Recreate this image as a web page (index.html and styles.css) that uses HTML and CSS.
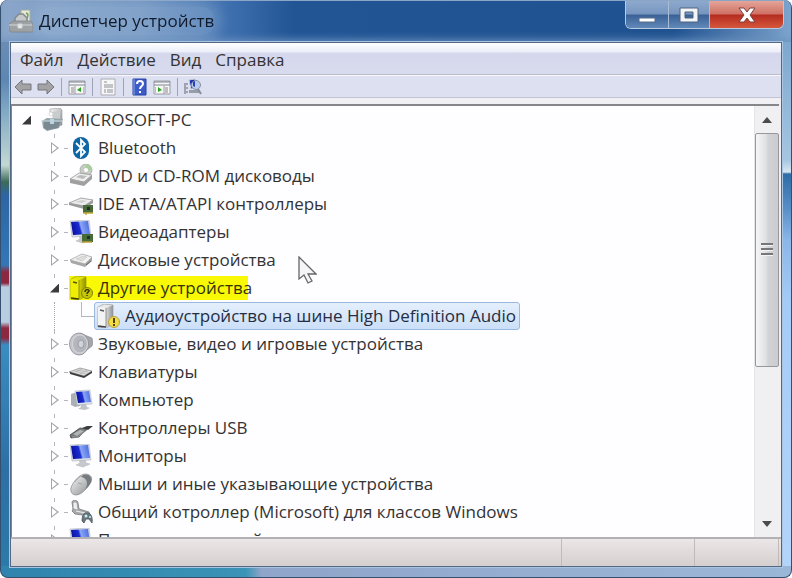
FILE: index.html
```
<!DOCTYPE html>
<html lang="ru">

<head>
    <meta charset="UTF-8">
    <meta name="viewport" content="width=device-width, initial-scale=1.0">
    <title>Диспетчер устройств</title>
    <link rel="stylesheet" href="styles.css">
</head>

<body>
    <!-- shared icons -->
    <svg class="sprite" aria-hidden="true">
        <defs>
            <linearGradient id="metal" x1="0" y1="0" x2="1" y2="1">
                <stop offset="0" stop-color="#fafafa" />
                <stop offset="1" stop-color="#85898d" />
            </linearGradient>
            <linearGradient id="side" x1="0" y1="0" x2="1" y2="0">
                <stop offset="0" stop-color="#d9dadc" />
                <stop offset="1" stop-color="#919396" />
            </linearGradient>
            <linearGradient id="screen" x1="0" y1="0.6" x2="1" y2="0.4">
                <stop offset="0" stop-color="#0710a0" />
                <stop offset="0.45" stop-color="#1b2cd0" />
                <stop offset="0.55" stop-color="#8aa6f5" />
                <stop offset="1" stop-color="#4a6be0" />
            </linearGradient>
        </defs>
        <symbol id="pc" viewBox="0 0 24 24">
            <path d="M9 1l10-1 2 2v15l-9 3V5L9 4z" fill="url(#metal)" stroke="#999" stroke-width=".6" />
            <path d="M12 4l7-1v9l-7 1z" fill="#c9cccd" />
            <circle cx="10" cy="6" r="2" fill="#fff" stroke="#bbb" stroke-width=".5" />
            <path d="M1 13l5-3 16 1-4 9-12 3-4-3z" fill="#96a3a9" />
            <path d="M3 13l14 1 3-2-3 8-11 2-3-2z" fill="#7b8a92" />
            <path d="M0 13h22" stroke="#c9dce1" />
            <path d="M9 11h4v5H9z" fill="#b9d5df" />
        </symbol>
        <symbol id="bluetooth" viewBox="0 0 24 24">
            <rect x="4" y="1" width="16" height="22" rx="8" fill="#0e66a4" />
            <path d="M7 7l9 9-4 4V4l4 4-9 9" fill="none" stroke="#fff" stroke-width="1.8" />
        </symbol>
        <symbol id="disc" viewBox="0 0 24 24">
            <ellipse cx="17" cy="6" rx="6" ry="6" fill="#c6cbc6" stroke="#9da49d" stroke-width=".7" />
            <path d="M17 0a6 6 0 0 1 6 6l-6 0z" fill="#a9cf9c" />
            <circle cx="17" cy="6" r="2" fill="#fff" />
            <path d="M1 15l9-6 13 2-8 7z" fill="#eee" stroke="#888" stroke-width=".7" />
            <path d="M1 15l14 3 8-7v4l-8 7-14-3z" fill="#a0a0a0" />
            <path d="M7 13l4-2 7 1-4 3z" fill="#bbb" />
        </symbol>
        <symbol id="ide" viewBox="0 0 24 24">
            <path d="M0 11l12-5 12 2-9 6z" fill="#ededed" stroke="#888" stroke-width=".7" />
            <path d="M0 11l15 3 9-6v3l-9 6-15-4z" fill="#9b9b9b" />
            <path d="M6 10l7-2 5 1-5 2z" fill="#d1d1d1" />
            <path d="M14 13h10v8H14z" fill="#466b39" />
            <path d="M14 21h10M17 21v2" stroke="#c4a939" stroke-width="1.5" />
            <path d="M18 15h3v3h-3z" fill="#222c24" />
        </symbol>
        <symbol id="display" viewBox="0 0 24 24">
            <path d="M10 15l6-1 1 5 4 1-7 3-7-2 4-2z" fill="#c5c8cc" stroke="#aeb2b6" stroke-width=".5" />
            <path d="M1 1l19-1 2 16-19 1z" fill="#d8dde6" stroke="#a5acb7" stroke-width=".5" />
            <path d="M2 2l17-1 2 13-17 1z" fill="url(#screen)" />
        </symbol>
        <symbol id="video" viewBox="0 0 24 24">
            <use href="#display" />
            <path d="M13 14h11v8H13z" fill="#466b39" />
            <path d="M13 22h10" stroke="#b99f37" stroke-width="1.5" />
            <path d="M18 16h3v3h-3z" fill="#20312a" />
        </symbol>
        <symbol id="drive" viewBox="0 0 24 24">
            <path d="M1 12l12-6 10 3-7 7z" fill="#f2f2f2" stroke="#999" stroke-width=".7" />
            <path d="M1 12l15 4 7-7v4l-7 6-14-4z" fill="#a7a7a7" />
            <path d="M7 11l7-3 4 1-5 4z" fill="#dedede" stroke="#bbb" stroke-width=".5" />
            <path d="M17 17l5-4" stroke="#646464" />
        </symbol>
        <symbol id="tower" viewBox="0 0 24 24">
            <path d="M2 3l6-3 9 1v19l-7 4-8-1z" fill="#e9e9ea" stroke="#8d8f91" stroke-width=".6" />
            <path d="M10 4l7-3v19l-7 4z" fill="url(#side)" />
            <path d="M2 3l8 1v19l-8-1z" fill="#f3f3f4" />
            <path d="M4 6l4 1" stroke="#55575a" stroke-width="1.6" />
            <path d="M2 22l8 1" stroke="#3f4144" stroke-width="1.5" />
            <path d="M10 4v19" stroke="#77797c" stroke-width=".8" />
        </symbol>
        <symbol id="unknown" viewBox="0 0 24 24">
            <use href="#tower" />
            <circle cx="18" cy="17" r="5.500" fill="#c9c9a6" stroke="#85856b" />
            <path d="M16 16c0-3 4-3 4-1 0 1-2 1-2 3M18 19v1" fill="none" stroke="#333" stroke-width="1.4" />
        </symbol>
        <symbol id="warning" viewBox="0 0 24 24">
            <use href="#tower" />
            <circle cx="18" cy="18" r="5.5" fill="#f3dc45" stroke="#b9a13c" />
            <path d="M18 14v5M18 20v2" stroke="#3e3512" stroke-width="1.8" />
        </symbol>
        <symbol id="sound" viewBox="0 0 24 24">
            <path d="M11 1l7 3 5 2c1 4 1 6 0 8l-5 4-6 5z" fill="#a3a5ab" stroke="#808288" stroke-width=".6" />
            <ellipse cx="10" cy="12" rx="9.500" ry="11" fill="#c6c7cd" stroke="#8b8d94" stroke-width=".8" />
            <ellipse cx="11" cy="12" rx="7.500" ry="9" fill="#b4b6bd" stroke="#d8dae0" stroke-width=".8" />
            <ellipse cx="12" cy="12" rx="3" ry="4" fill="#d0d3d8" stroke="#8e9299" stroke-width=".8" />
        </symbol>
        <symbol id="keyboard" viewBox="0 0 24 24">
            <path d="M0 12l11-4 12 3-8 5z" fill="#dcdcdc" stroke="#888" stroke-width=".7" />
            <path d="M1 12l14 4 8-5v2l-8 5-14-4z" fill="#3b3d3f" />
            <path d="M5 11l12 3M8 10l11 2M6 12l7-3M11 14l7-4" stroke="#aaa" stroke-width=".6" />
        </symbol>
        <symbol id="computer" viewBox="0 0 24 24">
            <path d="M2 6l6-2 3 1v13l-5 1-4-2z" fill="#aab0b4" />
            <path d="M11 16h6l1 3 3 1-5 2-7-1 3-2z" fill="#bfc4c7" />
            <path d="M6 3l15-1 2 14-15 1z" fill="#dce2ea" stroke="#a5acb7" stroke-width=".5" />
            <path d="M7 4l13-1 2 11-13 1z" fill="url(#screen)" />
        </symbol>
        <symbol id="usb" viewBox="0 0 24 24">
            <path d="M1 19L11 12l7 1-8 8-8 1z" fill="#75797b" stroke="#444" stroke-width=".8" />
            <path d="M4 18l7-4 4 1-7 5z" fill="#b3b6b7" />
            <path d="M13 12l5-2h6l-5 4z" fill="#3b3e40" />
            <path d="M3 21l6 0 9-7" fill="none" stroke="#aaa" stroke-width=".8" />
        </symbol>
        <symbol id="mouse" viewBox="0 0 24 24">
            <path d="M2 19c-2-5 8-17 14-17 5 0 8 3 6 8-3 5-9 13-15 13-3 0-5-2-5-4z" fill="url(#metal)" stroke="#888" stroke-width=".7" />
            <path d="M14 3c5-2 10 2 8 7-1 3-4 6-6 8 4-7 2-12-4-13z" fill="#777b7f" />
            <path d="M12 4c-3 2-5 4-6 6M9 11l4 1" fill="none" stroke="#999" stroke-width=".8" />
        </symbol>
        <symbol id="game" viewBox="0 0 24 24">
            <path d="M3 2c1-3 6-2 6 1l1 6 10 3 1 4-15-2-3-3 1-2z" fill="#a5a9ab" stroke="#777b7e" stroke-width=".8" />
            <path d="M5 3h2l1 6-3-1zM7 11l9 2" fill="#eee" stroke="#eee" />
            <path d="M13 21c0-6 2-9 6-8 3 0 5 5 4 10l-3-4h-3l-2 4z" fill="#67777f" stroke="#515b60" stroke-width=".8" />
            <circle cx="17" cy="16" r="1.500" fill="#d0eaf2" />
            <circle cx="21" cy="17" r="1" fill="#d0eaf2" />
        </symbol>
    </svg>

    <main class="window">
        <header class="titlebar">
            <h1 class="title">
                <svg class="app-icon" viewBox="0 0 24 24" aria-hidden="true">
                    <path d="M12 1h9v15h-9z" fill="#e9ead9" stroke="#a5aaa0" />
                    <path d="M17 4c3 1 2 4 0 7" fill="none" stroke="#68a255" stroke-width="1.500" />
                    <path d="M6 12V9l4-4h4l4 4v4" fill="#c7cacb" stroke="#85898b" stroke-width="1.500" />
                    <path d="M0 15l4-3h18l2 3v8H2l-2-2z" fill="#9da1a3" stroke="#7b7f81" stroke-width=".7" />
                    <path d="M0 16h23M9 15h4v4H9z" fill="#ededed" stroke="#d5d8da" />
                </svg>
                <span class="title-text">Диспетчер устройств</span>
            </h1>
            <div class="caption-buttons">
                <button class="minimize" aria-label="Свернуть">
                    <svg width="20" height="20" viewBox="0 0 20 20"><path d="M2 13h16v4H2z" fill="#fff" stroke="#596b86" /></svg>
                </button>
                <button class="maximize" aria-label="Развернуть">
                    <svg width="20" height="20" viewBox="0 0 20 20"><path d="M1 3h18v14H1zM6 7v6h8V7z" fill="#f2f4f8" fill-rule="evenodd" stroke="#53627a" /></svg>
                </button>
                <button class="close" aria-label="Закрыть">
                    <svg width="20" height="20" viewBox="0 0 20 20"><path d="M2 3h5l3 4 3-4h5l-5 7 5 7h-5l-3-4-3 4H2l5-7z" fill="#fff" stroke="#7b4040" /></svg>
                </button>
            </div>
        </header>

        <div class="client">
            <nav class="menubar">
                <button>Файл</button>
                <button>Действие</button>
                <button>Вид</button>
                <button>Справка</button>
            </nav>

            <div class="toolbar">
                <div class="group">
                    <button aria-label="Назад"><svg viewBox="0 0 18 18"><path d="M1 9l7-7v4h9v6H8v4z" fill="#a3a3a6" stroke="#77777b" /></svg></button>
                    <button aria-label="Вперёд"><svg viewBox="0 0 18 18"><path d="M17 9l-7-7v4H1v6h9v4z" fill="#a3a3a6" stroke="#77777b" /></svg></button>
                </div>
                <div class="group">
                    <button aria-label="Дерево консоли"><svg viewBox="0 0 18 18"><path d="M1 3h16v13H1z" fill="#f7f7f7" stroke="#999ba3" /><path d="M1 4h16M1 7h16" stroke="#7d8290" /><path d="M3 10h3M3 12h3M3 14h3M15 10h1M15 12h1M15 14h1" stroke="#888" /><path d="M7 8v8" stroke="#999" /><path d="M13 9v5l-4-2z" fill="#29a623" /></svg></button>
                </div>
                <div class="group">
                    <button aria-label="Свойства"><svg viewBox="0 0 18 18"><path d="M2 1h14v16H2z" fill="#f7f7f7" stroke="#aaacb4" /><path d="M5 4h3M5 7h9M5 9h9M5 12h2M8 12h6M5 14h2M8 14h6" stroke="#8d9298" /></svg></button>
                </div>
                <div class="group">
                    <button aria-label="Справка"><svg viewBox="0 0 18 18"><path d="M3 1h13v16H3z" fill="#3d5cc9" stroke="#2742a1" /><path d="M4 1v16" stroke="#8ba8ed" /><path d="M7 6c0-4 6-4 6 0 0 2-3 2-3 5M10 13v2" fill="none" stroke="#fff" stroke-width="2" /></svg></button>
                    <button aria-label="Панель действий"><svg viewBox="0 0 18 18"><path d="M1 3h16v13H1z" fill="#f7f7f7" stroke="#999ba3" /><path d="M1 4h16M1 7h16" stroke="#7d8290" /><path d="M12 10h3M12 12h3M12 14h3M2 10h1M2 12h1M2 14h1" stroke="#888" /><path d="M11 8v8" stroke="#999" /><path d="M5 9v5l4-2z" fill="#29a623" /></svg></button>
                </div>
                <div class="group">
                    <button aria-label="Обновить конфигурацию"><svg viewBox="0 0 18 18"><path d="M1 5v11M3 5v2M3 9v2M3 13v2" stroke="#8b8e98" stroke-width="1.500" /><path d="M5 2l6-1 1 9-5 1z" fill="#1531a8" stroke="#c9cedc" /><path d="M5 12h9l2 3H5z" fill="#979da7" /><circle cx="12" cy="7" r="4.500" fill="#b8ccef" stroke="#8c91a0" /><path d="M9 4l2-1v6l-2-1z" fill="#2641b3" /><path d="M14 11l3 5" stroke="#888c96" stroke-width="2" /></svg></button>
                </div>
            </div>

            <div class="tree-pane">
                <div class="tree-view">
                    <ul class="tree">
                        <li>
                            <div class="row"><button class="expander open" aria-label="Свернуть"></button><svg class="icon"><use href="#pc" /></svg><span class="name">MICROSOFT-PC</span></div>
                            <ul class="branch">
                                <li><div class="row"><button class="expander" aria-label="Развернуть"></button><svg class="icon"><use href="#bluetooth" /></svg><span class="name">Bluetooth</span></div></li>
                                <li><div class="row"><button class="expander" aria-label="Развернуть"></button><svg class="icon"><use href="#disc" /></svg><span class="name">DVD и CD-ROM дисководы</span></div></li>
                                <li><div class="row"><button class="expander" aria-label="Развернуть"></button><svg class="icon"><use href="#ide" /></svg><span class="name">IDE ATA/ATAPI контроллеры</span></div></li>
                                <li><div class="row"><button class="expander" aria-label="Развернуть"></button><svg class="icon"><use href="#video" /></svg><span class="name">Видеоадаптеры</span></div></li>
                                <li><div class="row"><button class="expander" aria-label="Развернуть"></button><svg class="icon"><use href="#drive" /></svg><span class="name">Дисковые устройства</span></div></li>
                                <li>
                                    <div class="row"><button class="expander open" aria-label="Свернуть"></button><span class="marked"><svg class="icon"><use href="#unknown" /></svg><span class="name">Другие устройства</span></span></div>
                                    <ul class="leaves">
                                        <li><div class="row selected"><svg class="icon"><use href="#warning" /></svg><span class="name">Аудиоустройство на шине High Definition Audio</span></div></li>
                                    </ul>
                                </li>
                                <li><div class="row"><button class="expander" aria-label="Развернуть"></button><svg class="icon"><use href="#sound" /></svg><span class="name">Звуковые, видео и игровые устройства</span></div></li>
                                <li><div class="row"><button class="expander" aria-label="Развернуть"></button><svg class="icon"><use href="#keyboard" /></svg><span class="name">Клавиатуры</span></div></li>
                                <li><div class="row"><button class="expander" aria-label="Развернуть"></button><svg class="icon"><use href="#computer" /></svg><span class="name">Компьютер</span></div></li>
                                <li><div class="row"><button class="expander" aria-label="Развернуть"></button><svg class="icon"><use href="#usb" /></svg><span class="name">Контроллеры USB</span></div></li>
                                <li><div class="row"><button class="expander" aria-label="Развернуть"></button><svg class="icon"><use href="#display" /></svg><span class="name">Мониторы</span></div></li>
                                <li><div class="row"><button class="expander" aria-label="Развернуть"></button><svg class="icon"><use href="#mouse" /></svg><span class="name">Мыши и иные указывающие устройства</span></div></li>
                                <li><div class="row"><button class="expander" aria-label="Развернуть"></button><svg class="icon"><use href="#game" /></svg><span class="name">Общий котроллер (Microsoft) для классов Windows</span></div></li>
                                <li><div class="row"><button class="expander" aria-label="Развернуть"></button><svg class="icon"><use href="#display" /></svg><span class="name">Переносные устройства</span></div></li>
                            </ul>
                        </li>
                    </ul>
                </div>
                <div class="scrollbar">
                    <button class="scroll-up" aria-label="Вверх"></button>
                    <div class="track"><div class="thumb"></div></div>
                    <button class="scroll-down" aria-label="Вниз"></button>
                </div>
            </div>

            <footer class="statusbar">
                <span></span>
                <span></span>
                <span></span>
            </footer>
        </div>

        <svg class="cursor" width="20" height="29" viewBox="0 0 20 29" aria-hidden="true">
            <path d="M2 1v22l5-4 4 8 4-2-4-7h8z" fill="#f5f5f7" stroke="#66666c" stroke-width="1.300" />
        </svg>
    </main>
</body>

</html>
```
FILE: styles.css
```
/* Basic Style */
* {
    box-sizing: border-box;
}

body {
    margin: 0;
    color: #333;
    font-family: "Open Sans", "Noto Sans", sans-serif;
    font-size: 17px;
    line-height: 28px;
}

ul {
    margin: 0;
    padding: 0;
    list-style: none;
}

button {
    margin: 0;
    padding: 0;
    border: 0;
    background: none;
    color: inherit;
    font: inherit;
}

svg {
    display: block;
}

.sprite {
    position: absolute;
    width: 0;
    height: 0;
}

/* Window frame, the desktop shows through the glass */
.window {
    position: relative;
    display: flex;
    flex-direction: column;
    height: 100vh;
    padding: 0 9px 10px;
    border: 1px solid #34506e;
    border-top: 0;
    border-radius: 8px;
    overflow: hidden;
    background:
        linear-gradient(90deg, #2f83ad, #3a94b7 31%, #8fa5c9 33%, #9bb7d8) bottom / 100% 11px no-repeat,
        linear-gradient(#6f9cc8, #a5c6e2 160px, #d7e6f2 172px, #2f6ca6 174px, #5a90c8 210px, #8ab6e8 240px, #a4cbf8 300px, #b4d5fa) right / 10px 100% no-repeat,
        linear-gradient(#7b93b5, #5c87b3 80px, #7fa8c4 110px, #c3d8d2 165px, #3d6a58 182px, #2d65a3 195px, #3477b6 265px, #8c2940 272px, #8c2940 283px, #b9cde0 287px, #b9cde0 322px, #8c2940 328px, #8c2940 338px, #3a8cc0 345px, #2d6fa5 470px, #2c7ba8) left / 10px 100% no-repeat,
        #2c5f9c;
}

/* Title bar */
.titlebar {
    display: flex;
    justify-content: space-between;
    align-items: flex-start;
    height: 42px;
    margin: 0 -9px;
    padding-left: 8px;
    border-top: 1px solid #8aa5c5;
    background: linear-gradient(90deg, #8ba6c9, #6f93bf 18%, #3e6fae 29%, #225594 37%, #1f5290 85%, #6e96c2 98%, #7ea7cf);
    box-shadow: inset 0 -5px 8px -3px #6e94c0;
}

.title {
    display: flex;
    align-items: center;
    gap: 6px;
    margin: 6px 0 0;
    color: #111b2c;
    font-size: 17px;
    font-weight: 400;
}

.title-text {
    border-radius: 12px;
    background: rgba(170, 195, 225, .3);
    box-shadow: 0 0 14px 6px rgba(170, 195, 225, .3);
}

.app-icon {
    width: 24px;
    height: 24px;
}

.caption-buttons {
    display: flex;
    margin-right: 7px;
    border: 1px solid #b8c9df;
    border-top: 0;
    border-radius: 0 0 6px 6px;
    overflow: hidden;
}

.caption-buttons button {
    display: flex;
    justify-content: center;
    align-items: center;
    width: 41px;
    height: 27px;
    border-right: 1px solid #a9bdd7;
    background: linear-gradient(#8ea9cd, #7695bf 48%, #3a6196 52%, #6189b9);
}

.caption-buttons .minimize {
    width: 43px;
}

.caption-buttons .close {
    width: 73px;
    border-right: 0;
    background: linear-gradient(#e4a599, #cf7064 48%, #b52c1f 52%, #d5573c);
}

/* Client area */
.client {
    display: flex;
    flex: 1;
    flex-direction: column;
    min-height: 0;
    border: 1px solid #526885;
    background: #f0f0f4;
    box-shadow: 0 0 0 1px #a9c5e2;
}

.menubar {
    display: flex;
    gap: 14px;
    height: 32px;
    padding: 2px 9px 0;
    border-bottom: 1px solid #bbbdcd;
    background: linear-gradient(#fff, #eceef8 9px, #d5d8ec 10px, #d8daee);
}

.toolbar {
    display: flex;
    align-items: center;
    height: 23px;
    border-top: 1px solid #f8f8fc;
    border-bottom: 1px solid #c2c4d4;
    background: #dde0f1;
}

.group {
    display: flex;
    gap: 5px;
    padding: 0 6px;
    border-right: 1px solid #a0a3b3;
}

.group:first-child {
    padding-left: 3px;
}

.group:last-child {
    border-right: 0;
}

.toolbar svg {
    width: 18px;
    height: 18px;
}

/* Tree */
.tree-pane {
    display: flex;
    flex: 1;
    min-height: 0;
    margin: 6px 2px 0 0;
    border-top: 2px solid #85858a;
    border-left: 1px solid #85858a;
    background: #fefdff;
}

.tree-view {
    flex: 1;
    min-width: 0;
    overflow: hidden;
}

.tree {
    padding-left: 9px;
}

.row {
    display: flex;
    align-items: center;
    height: 28px;
    white-space: nowrap;
}

.icon {
    flex: none;
    width: 24px;
    height: 24px;
    margin-right: 5px;
}

.expander {
    position: relative;
    flex: none;
    width: 20px;
    height: 28px;
}

.expander::before {
    content: "";
    display: block;
    width: 8px;
    height: 12px;
    margin-left: 2px;
    background: #a5a5a8;
    clip-path: polygon(0 0, 100% 50%, 0 100%);
}

.expander::after {
    content: "";
    position: absolute;
    top: 10px;
    left: 3px;
    width: 5px;
    height: 8px;
    background: #fff;
    clip-path: polygon(0 0, 100% 50%, 0 100%);
}

.expander.open::before {
    width: 9px;
    height: 9px;
    margin-left: 1px;
    background: #3a3a3d;
    clip-path: polygon(100% 0, 100% 100%, 0 100%);
}

.expander.open::after {
    display: none;
}

.branch {
    padding-left: 28px;
}

.branch > li {
    background:
        linear-gradient(#b5b5ba, #b5b5ba) 5px 0 / 1px 4px no-repeat,
        linear-gradient(#b5b5ba, #b5b5ba) 15px 14px / 4px 1px no-repeat;
}

.leaves {
    margin-left: 5px;
    padding-left: 39px;
    border-left: 1px dotted #aaaaae;
    background:
        linear-gradient(#b5b5ba, #b5b5ba) 26px 0 / 1px 14px no-repeat,
        linear-gradient(#b5b5ba, #b5b5ba) 26px 14px / 13px 1px no-repeat;
}

.marked {
    position: relative;
    display: flex;
    align-items: center;
}

/* marker pen over the icon and the name */
.marked::after {
    content: "";
    position: absolute;
    inset: 2px 4px 2px 0;
    background: #fbfb05;
    mix-blend-mode: multiply;
}

.selected {
    width: max-content;
    padding: 0 3px 0 1px;
    border: 1px solid #9bb9df;
    border-radius: 3px;
    background: linear-gradient(#e5effc, #cbdff8);
    color: #242d42;
}

/* Scroll bar */
.scrollbar {
    display: flex;
    flex-direction: column;
    width: 25px;
    border-left: 1px solid #e5e4e8;
    background: #f0eff2;
}

.scroll-up,
.scroll-down {
    display: flex;
    justify-content: center;
    align-items: center;
    height: 27px;
}

.scroll-up::before,
.scroll-down::before {
    content: "";
    border: 5px solid transparent;
    border-top: 0;
    border-bottom: 6px solid #4b4b4e;
}

.scroll-down::before {
    border-top: 6px solid #4b4b4e;
    border-bottom: 0;
}

.track {
    flex: 1;
}

.thumb {
    display: flex;
    justify-content: center;
    align-items: center;
    height: 62%;
    border: 1px solid #98989c;
    border-radius: 2px;
    background: linear-gradient(90deg, #f6f6f7, #e0e1e4 45%, #d2d3d7 55%, #cbccd0);
}

.thumb::before {
    content: "";
    width: 12px;
    height: 14px;
    background: repeating-linear-gradient(#77777b 0 2px, #f3f3f5 2px 3px, transparent 3px 5px);
}

/* Status bar */
.statusbar {
    display: flex;
    height: 29px;
    padding-right: 2px;
    border-top: 2px solid #b3b1b3;
    background: linear-gradient(#ebe6e7, #d5cfcf);
}

.statusbar span {
    width: 84px;
    border-right: 1px solid #c0baba;
}

.statusbar span:nth-child(2) {
    width: 133px;
}

.statusbar span:first-child {
    flex: 1;
}

/* Mouse pointer */
.cursor {
    position: absolute;
    top: 256px;
    left: 296px;
}
```
